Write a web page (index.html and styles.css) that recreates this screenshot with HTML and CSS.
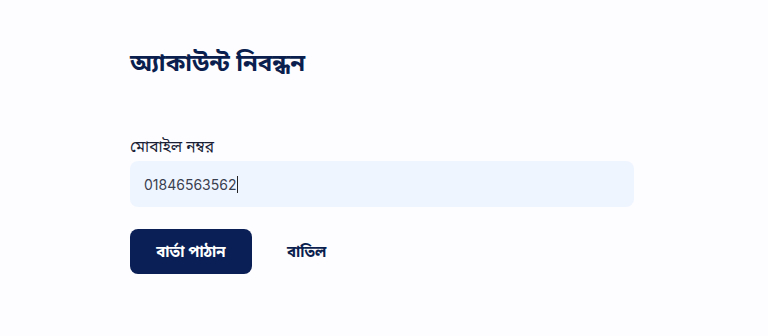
FILE: index.html
```html
<!DOCTYPE html>
<html lang="bn">
<head>
<meta charset="utf-8">
<link rel="stylesheet" href="styles.css">
</head>
<body>
<main class="page">
  <h1 class="title">অ্যাকাউন্ট নিবন্ধন</h1>
  <form class="form">
    <label class="label" for="mobile">মোবাইল নম্বর</label>
    <div class="input"><span class="value">01846563562</span><span class="caret"></span></div>
    <div class="actions">
      <button type="button" class="btn-primary">বার্তা পাঠান</button>
      <button type="button" class="btn-link">বাতিল</button>
    </div>
  </form>
</main>
</body>
</html>
```
FILE: styles.css
```css
html, body { margin: 0; padding: 0; }
body {
  background: #fdfcff;
  width: 768px;
  height: 336px;
  font-family: "Noto Sans", "Noto Sans Bengali", sans-serif;
  color: #0b1f4f;
}
.page {
  padding: 44px 0 0 130px;
  width: 504px;
}
.title {
  margin: 0;
  font-size: 24px;
  font-weight: 700;
  line-height: 36px;
  color: #0b1f4f;
}
.form {
  margin-top: 55px;
  display: flex;
  flex-direction: column;
}
.label {
  font-size: 15.5px;
  line-height: 22px;
  color: #1a1f36;
  margin-bottom: 4px;
}
.input {
  height: 46px;
  background: #eff5ff;
  border-radius: 8px;
  display: flex;
  align-items: center;
  padding-left: 14px;
  font-family: Inter, "Noto Sans", sans-serif;
  font-size: 14px;
  color: #3a3f4f;
}
.caret {
  display: inline-block;
  width: 1px;
  height: 17px;
  background: #222;
  margin-left: 1px;
}
.actions {
  margin-top: 22px;
  display: flex;
  align-items: center;
  gap: 35px;
}
.btn-primary {
  width: 122px;
  height: 45px;
  border: none;
  border-radius: 8px;
  background: #0a1f55;
  color: #fff;
  font-family: "Noto Sans", "Noto Sans Bengali", sans-serif;
  font-size: 15px;
  font-weight: 700;
  cursor: pointer;
}
.btn-link {
  border: none;
  background: none;
  padding: 0;
  font-family: "Noto Sans", "Noto Sans Bengali", sans-serif;
  font-size: 15px;
  font-weight: 700;
  color: #0b1f4f;
  cursor: pointer;
}
```
